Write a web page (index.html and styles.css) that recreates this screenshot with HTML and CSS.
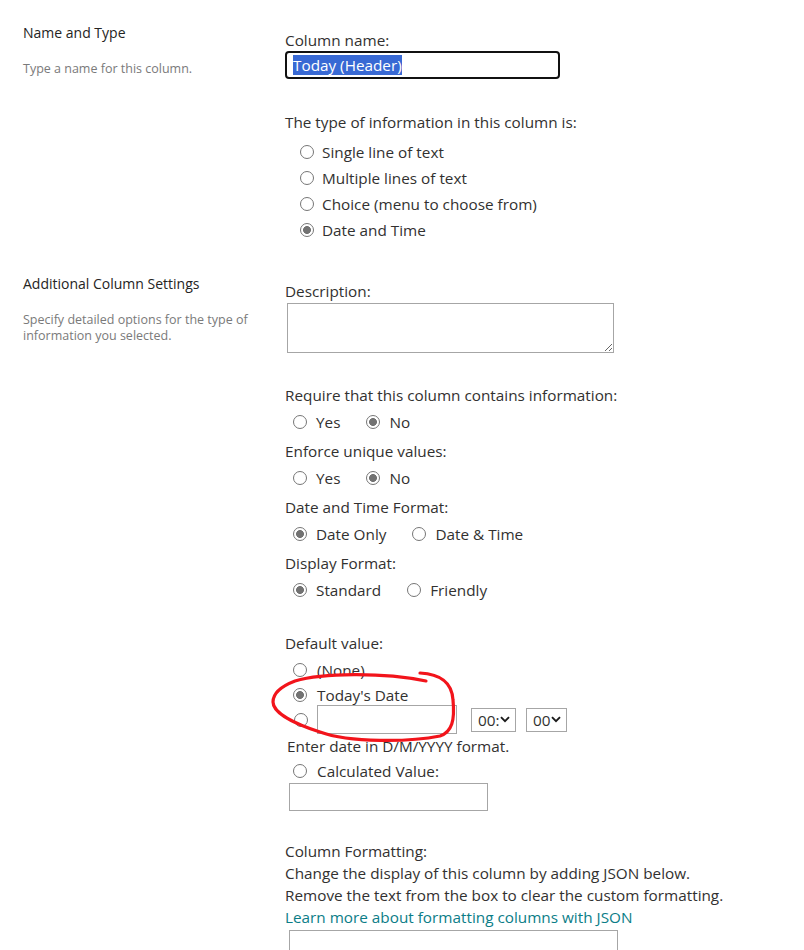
FILE: index.html
```html
<!DOCTYPE html>
<html lang="en">
<head>
<meta charset="utf-8">
<title>Create Column</title>
<link rel="stylesheet" href="styles.css">
</head>
<body>
<div class="page">
  <section class="sec sec-name">
    <div class="info">
      <h3 class="info-title">Name and Type</h3>
      <p class="info-desc">Type a name for this column.</p>
    </div>
    <div class="fields">
      <div class="lbl">Column name:</div>
      <div class="name-box"><span class="sel">Today (Header)</span></div>
      <div class="lbl lbl-type">The type of information in this column is:</div>
      <div class="type-list">
        <label class="opt"><input type="radio" name="type"><span>Single line of text</span></label>
        <label class="opt"><input type="radio" name="type"><span>Multiple lines of text</span></label>
        <label class="opt"><input type="radio" name="type"><span>Choice (menu to choose from)</span></label>
        <label class="opt"><input type="radio" name="type" checked><span>Date and Time</span></label>
      </div>
    </div>
  </section>

  <section class="sec sec-extra">
    <div class="info">
      <h3 class="info-title">Additional Column Settings</h3>
      <p class="info-desc">Specify detailed options for the type of information you selected.</p>
    </div>
    <div class="fields fields-extra">
      <div class="lbl">Description:</div>
      <textarea class="desc-area"></textarea>

      <div class="q q-first">Require that this column contains information:</div>
      <div class="inline-row">
        <label class="iopt"><input type="radio" name="req"><span>Yes</span></label>
        <label class="iopt"><input type="radio" name="req" checked><span>No</span></label>
      </div>

      <div class="q">Enforce unique values:</div>
      <div class="inline-row">
        <label class="iopt"><input type="radio" name="uniq"><span>Yes</span></label>
        <label class="iopt"><input type="radio" name="uniq" checked><span>No</span></label>
      </div>

      <div class="q">Date and Time Format:</div>
      <div class="inline-row">
        <label class="iopt"><input type="radio" name="fmt" checked><span>Date Only</span></label>
        <label class="iopt"><input type="radio" name="fmt"><span>Date &amp; Time</span></label>
      </div>

      <div class="q">Display Format:</div>
      <div class="inline-row">
        <label class="iopt"><input type="radio" name="disp" checked><span>Standard</span></label>
        <label class="iopt"><input type="radio" name="disp"><span>Friendly</span></label>
      </div>

      <div class="q q-default">Default value:</div>
      <label class="dopt dopt-none"><input type="radio" name="def"><span>(None)</span></label>
      <label class="dopt dopt-today"><input type="radio" name="def" checked><span>Today's Date</span></label>
      <div class="dopt-date">
        <input type="radio" name="def">
        <div class="date-box"></div>
        <div class="sel-box sel-hour"><span>00:</span><svg class="chev" width="10" height="7" viewBox="0 0 10 7"><path d="M1 1.2 L5 5.2 L9 1.2" fill="none" stroke="#1b1b1b" stroke-width="1.9"/></svg></div>
        <div class="sel-box sel-min"><span>00</span><svg class="chev" width="10" height="7" viewBox="0 0 10 7"><path d="M1 1.2 L5 5.2 L9 1.2" fill="none" stroke="#1b1b1b" stroke-width="1.9"/></svg></div>
      </div>
      <div class="hint">Enter date in D/M/YYYY format.</div>
      <label class="dopt dopt-calc"><input type="radio" name="def"><span>Calculated Value:</span></label>
      <div class="calc-box"></div>

      <div class="txt txt-first">Column Formatting:</div>
      <div class="txt">Change the display of this column by adding JSON below.</div>
      <div class="txt">Remove the text from the box to clear the custom formatting.</div>
      <div class="txt"><a class="link" href="#">Learn more about formatting columns with JSON</a></div>
      <textarea class="json-area"></textarea>
    </div>
  </section>

  <svg class="annot" width="804" height="950" viewBox="0 0 804 950">
    <path d="M420,673 C440,674 452,682 453,700 C455,720 452,732 440,736 C410,742 350,743 320,732 C295,724 273,713 273,702 C273,693 282,686 295,681 C322,673 382,672 426,681" fill="none" stroke="#f2141b" stroke-width="3.2" stroke-linecap="round" stroke-linejoin="round"/>
  </svg>
</div>
</body>
</html>
```

FILE: styles.css
```css
html, body {
  margin: 0;
  padding: 0;
  background: #ffffff;
}

body {
  font-family: "Open Sans", "Noto Sans", "Liberation Sans", sans-serif;
  color: #323130;
  font-size: 15.3px;
}

.page {
  position: relative;
  width: 804px;
  height: 950px;
  overflow: hidden;
}

.sec {
  display: grid;
  grid-template-columns: 285px 1fr;
}

.sec-extra {
  margin-top: 32px;
}

.info {
  padding-left: 23px;
}

.sec-name .info {
  padding-top: 24px;
}

.info-title {
  margin: 0;
  font-size: 14px;
  font-weight: 400;
  line-height: 18px;
  color: #252423;
}

.info-desc {
  margin: 19px 0 0;
  width: 245px;
  font-size: 12.5px;
  line-height: 16px;
  color: #7a7a7a;
}

.fields {
  display: flex;
  flex-direction: column;
  align-items: flex-start;
}

.sec-name .fields {
  padding-top: 30px;
}

.fields-extra {
  padding-top: 6px;
}

.lbl {
  line-height: 20px;
}

.name-box {
  margin-top: 1px;
  width: 275px;
  height: 28px;
  box-sizing: border-box;
  border: 2px solid #111;
  border-radius: 4px;
  padding-left: 6px;
  display: flex;
  align-items: center;
}

.sel {
  background: #3869d4;
  color: #ffffff;
  line-height: 20px;
  height: 20px;
}

.lbl-type {
  margin-top: 33px;
}

.type-list {
  margin-top: 7px;
  padding-left: 15px;
  display: flex;
  flex-direction: column;
}

.opt {
  height: 26px;
  display: flex;
  align-items: center;
  gap: 8px;
}

input[type="radio"] {
  appearance: none;
  -webkit-appearance: none;
  width: 14px;
  height: 14px;
  margin: 0;
  box-sizing: border-box;
  border: 1.3px solid #767676;
  border-radius: 50%;
  background: #ffffff;
  flex: none;
}

input[type="radio"]:checked {
  border-color: #767676;
  background: radial-gradient(circle, #727272 0, #727272 3.6px, #ffffff 4.3px);
}

.desc-area {
  display: block;
  margin: 2px 0 0 2px;
  width: 327px;
  height: 50px;
  box-sizing: border-box;
  border: 1px solid #a6a6a6;
  border-radius: 0;
  padding: 2px;
  font: inherit;
}

.q {
  line-height: 22px;
}

.q-first {
  margin-top: 31px;
}

.inline-row {
  height: 32px;
  margin-bottom: 2px;
  padding-left: 8px;
  display: flex;
  align-items: center;
  gap: 26px;
}

.iopt {
  display: flex;
  align-items: center;
  gap: 9px;
}

.q-default {
  margin-top: 24px;
}

.dopt {
  display: flex;
  align-items: center;
  gap: 10px;
  padding-left: 8px;
}

.dopt-none {
  margin-top: 3px;
  height: 25px;
}

.dopt-today {
  height: 25px;
}

.dopt-date {
  margin-top: -2px;
  height: 29px;
  padding-left: 9px;
  display: flex;
  align-items: center;
}

.date-box {
  margin-left: 9px;
  width: 140px;
  height: 29px;
  box-sizing: border-box;
  border: 1px solid #a6a6a6;
}

.sel-box {
  height: 24px;
  box-sizing: border-box;
  border: 1px solid #a6a6a6;
  display: flex;
  align-items: center;
  justify-content: space-between;
  padding: 0 5px 0 6px;
  line-height: 20px;
}

.sel-hour {
  margin-left: 14px;
  width: 45px;
}

.sel-min {
  margin-left: 10px;
  width: 41px;
}

.chev {
  display: block;
  flex: none;
}

.hint {
  margin-top: 1px;
  margin-left: 2px;
  line-height: 22px;
}

.dopt-calc {
  margin-top: 3px;
  height: 22px;
}

.calc-box {
  margin: 1px 0 0 4px;
  width: 199px;
  height: 28px;
  box-sizing: border-box;
  border: 1px solid #a6a6a6;
}

.txt {
  line-height: 22px;
}

.txt-first {
  margin-top: 29px;
}

.link {
  color: #0b7d87;
  text-decoration: none;
}

.json-area {
  display: block;
  margin: 2px 0 0 4px;
  width: 329px;
  height: 80px;
  box-sizing: border-box;
  border: 1px solid #a6a6a6;
  font: inherit;
}

.annot {
  position: absolute;
  left: 0;
  top: 0;
  pointer-events: none;
}
```
